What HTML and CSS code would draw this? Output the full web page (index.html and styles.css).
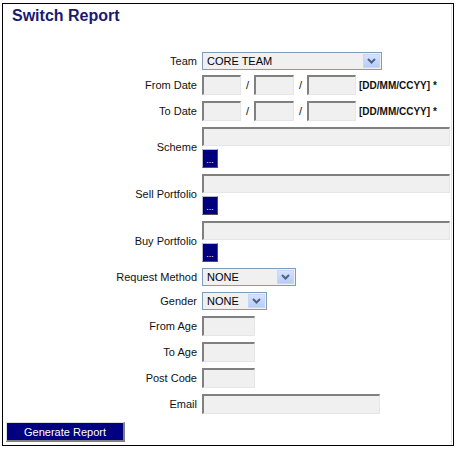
FILE: index.html
```html
<!DOCTYPE html>
<html>
<head>
<meta charset="utf-8">
<title>Switch Report</title>
<link rel="stylesheet" href="styles.css">
</head>
<body>
<div class="frame">
  <h1 class="title">Switch Report</h1>
  <form class="rows">
    <div class="row row-first">
      <label class="lbl">Team</label>
      <div class="sel w-team"><span class="sel-text">CORE TEAM</span><span class="sel-btn"><svg width="9" height="6" viewBox="0 0 9 6"><path d="M1 1 L4.5 4.5 L8 1" fill="none" stroke="#4d6185" stroke-width="2"/></svg></span></div>
    </div>
    <div class="row">
      <label class="lbl">From Date</label>
      <input class="txt w-d1" type="text"><span class="slash">/</span><input class="txt w-d2" type="text"><span class="slash">/</span><input class="txt w-d3" type="text"><span class="fmt">[DD/MM/CCYY] *</span>
    </div>
    <div class="row">
      <label class="lbl">To Date</label>
      <input class="txt w-d1" type="text"><span class="slash">/</span><input class="txt w-d2" type="text"><span class="slash">/</span><input class="txt w-d3" type="text"><span class="fmt">[DD/MM/CCYY] *</span>
    </div>
    <div class="row">
      <label class="lbl">Scheme</label>
      <div class="stack"><input class="txt txt-wide" type="text"><button class="btn-dots" type="button">...</button></div>
    </div>
    <div class="row">
      <label class="lbl">Sell Portfolio</label>
      <div class="stack"><input class="txt txt-wide" type="text"><button class="btn-dots" type="button">...</button></div>
    </div>
    <div class="row">
      <label class="lbl">Buy Portfolio</label>
      <div class="stack"><input class="txt txt-wide" type="text"><button class="btn-dots" type="button">...</button></div>
    </div>
    <div class="row">
      <label class="lbl">Request Method</label>
      <div class="sel w-req"><span class="sel-text">NONE</span><span class="sel-btn"><svg width="9" height="6" viewBox="0 0 9 6"><path d="M1 1 L4.5 4.5 L8 1" fill="none" stroke="#4d6185" stroke-width="2"/></svg></span></div>
    </div>
    <div class="row">
      <label class="lbl">Gender</label>
      <div class="sel w-gen"><span class="sel-text">NONE</span><span class="sel-btn"><svg width="9" height="6" viewBox="0 0 9 6"><path d="M1 1 L4.5 4.5 L8 1" fill="none" stroke="#4d6185" stroke-width="2"/></svg></span></div>
    </div>
    <div class="row">
      <label class="lbl">From Age</label>
      <input class="txt w-age" type="text">
    </div>
    <div class="row">
      <label class="lbl">To Age</label>
      <input class="txt w-age" type="text">
    </div>
    <div class="row">
      <label class="lbl">Post Code</label>
      <input class="txt w-age" type="text">
    </div>
    <div class="row">
      <label class="lbl">Email</label>
      <input class="txt w-email" type="text">
    </div>
  </form>
  <button class="btn-gen" type="button">Generate Report</button>
</div>
</body>
</html>
```
FILE: styles.css
```css
* { box-sizing: border-box; }
body {
  margin: 0;
  background: #fff;
  font-family: "Liberation Sans", Arial, sans-serif;
  font-size: 11px;
  color: #111;
}
.frame {
  margin: 3px 0 0 2px;
  width: 452px;
  height: 443px;
  border: 1px solid #000;
  padding-top: 3px;
  box-shadow: inset -1px 0 0 #fff, inset -2px 0 0 #e2e2e2;
}
.title {
  margin: 0 0 27px 9px;
  font-size: 16px;
  line-height: 18px;
  font-weight: bold;
  color: #1a1a6e;
}
.rows {
  display: flex;
  flex-direction: column;
  gap: 6px;
  margin: 0;
}
.row {
  display: flex;
  align-items: center;
}
.row-first { margin-bottom: -1px; }
.lbl {
  flex: none;
  width: 194px;
  margin-right: 5px;
  text-align: right;
  line-height: 13px;
}
.txt {
  flex: none;
  height: 20px;
  margin: 0;
  padding: 0 2px;
  border-style: solid;
  border-width: 2px 1px 1px 2px;
  border-color: #808080 #e6e6e6 #e6e6e6 #808080;
  background: #f0f0f0;
  font: inherit;
}
.w-d1 { width: 39px; }
.w-d2 { width: 40px; }
.w-d3 { width: 49px; }
.w-age { width: 53px; }
.w-email { width: 178px; }
.txt-wide { width: 248px; height: 19px; }
.slash {
  margin: 0 5px;
  width: 3px;
}
.fmt {
  margin-left: 3px;
  font-size: 10px;
  font-weight: bold;
}
.stack {
  display: flex;
  flex-direction: column;
  align-items: flex-start;
  gap: 3px;
}
.btn-dots {
  width: 16px;
  height: 19px;
  margin: 0;
  padding: 2px 0 0;
  background: #00007f;
  color: #fff;
  border: 1px solid;
  border-color: #b8b8c8 #505050 #505050 #b8b8c8;
  font-family: "Liberation Sans", Arial, sans-serif;
  font-size: 9px;
  line-height: 10px;
}
.sel {
  flex: none;
  display: flex;
  height: 18px;
  border: 1px solid #7f9db9;
  background: #f0f0f0;
}
.w-team { width: 180px; }
.w-req { width: 94px; }
.w-gen { width: 65px; }
.sel-text {
  flex: 1;
  padding-left: 4px;
  line-height: 16px;
  color: #000;
}
.sel-btn {
  flex: none;
  width: 17px;
  margin: 1px;
  display: flex;
  align-items: center;
  justify-content: center;
  background: linear-gradient(#d6e2fd, #b7ccf6);
  border: 1px solid #c6d6fc;
}
.btn-gen {
  display: block;
  margin: 8px 0 0 3px;
  width: 119px;
  height: 20px;
  padding: 0;
  background: #000080;
  color: #fff;
  font-family: "Liberation Sans", Arial, sans-serif;
  font-size: 11px;
  border-style: solid;
  border-width: 1px 2px 2px 1px;
  border-color: #e0e0e0 #808080 #808080 #e0e0e0;
}
```
